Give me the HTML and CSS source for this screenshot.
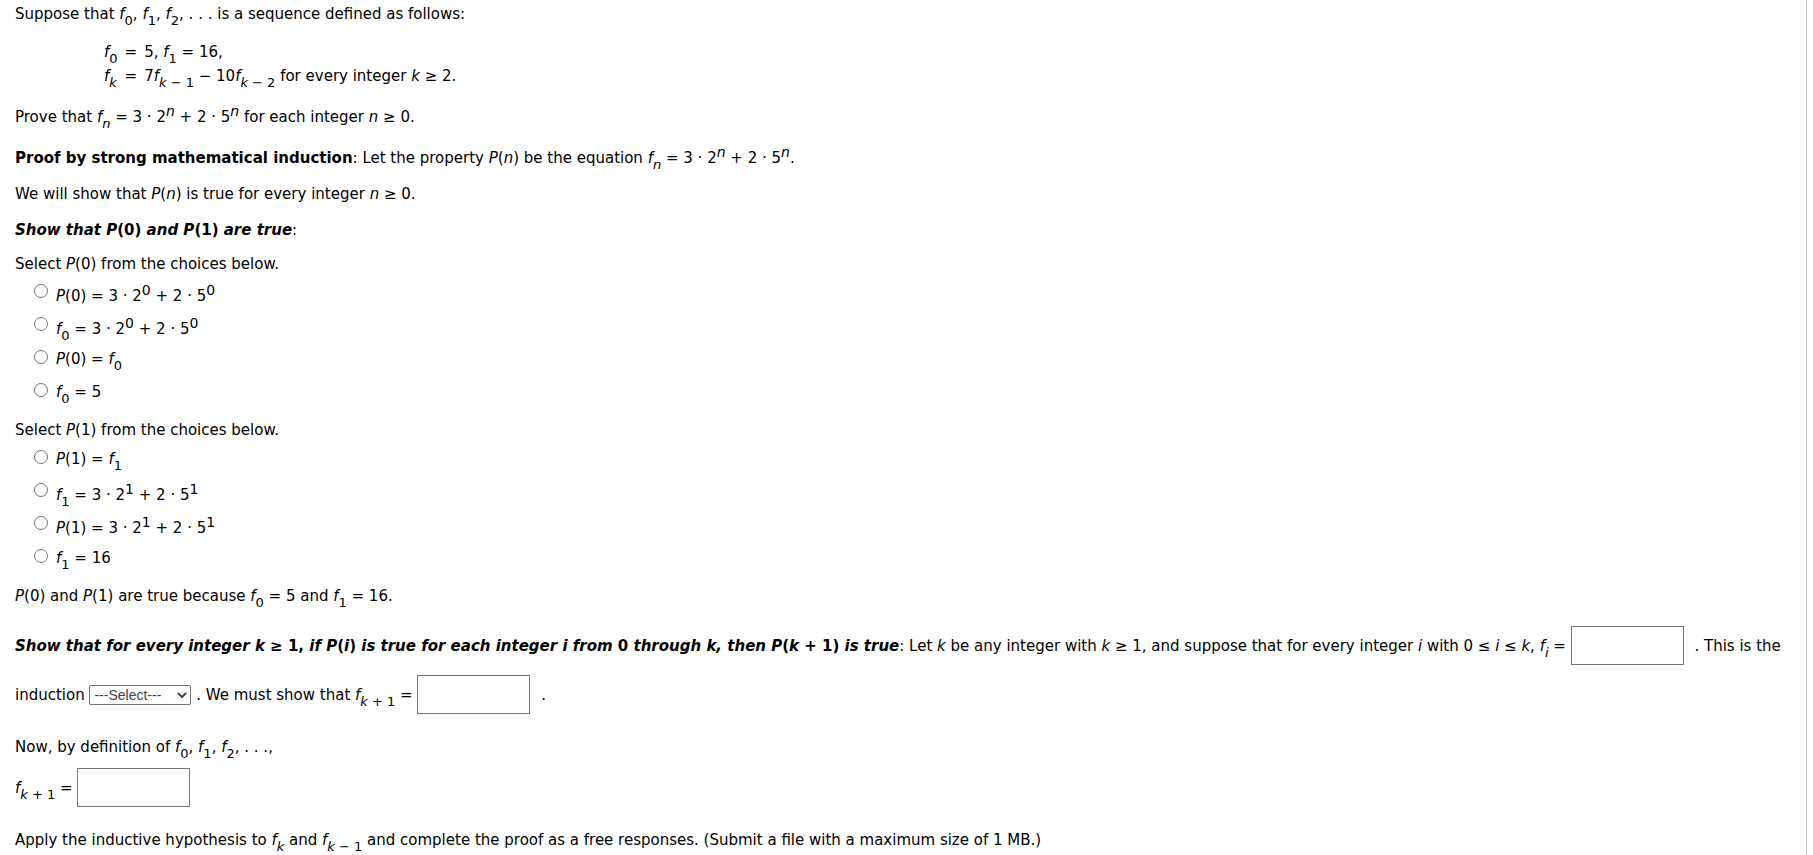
FILE: index.html
```
<!DOCTYPE html>
<html lang="en">

<head>
    <meta charset="UTF-8">
    <meta name="viewport" content="width=device-width, initial-scale=1.0">
    <title>Strong Mathematical Induction</title>
    <link rel="stylesheet" href="styles.css">
</head>

<body>
    <main class="question">
        <p class="intro">Suppose that <i>f</i><sub>0</sub>, <i>f</i><sub>1</sub>, <i>f</i><sub>2</sub>, . . . is a sequence defined as follows:</p>

        <div class="equations">
            <span><i>f</i><sub>0</sub></span>
            <span>=</span>
            <span>5, <i>f</i><sub>1</sub> = 16,</span>
            <span><i>f</i><sub><i>k</i></sub></span>
            <span>=</span>
            <span>7<i>f</i><sub><i>k</i> − 1</sub> − 10<i>f</i><sub><i>k</i> − 2</sub> for every integer <i>k</i> ≥ 2.</span>
        </div>

        <p class="statement">Prove that <i>f</i><sub><i>n</i></sub> = 3 · 2<sup><i>n</i></sup> + 2 · 5<sup><i>n</i></sup> for each integer <i>n</i> ≥ 0.</p>
        <p class="statement"><b>Proof by strong mathematical induction</b>: Let the property <i>P</i>(<i>n</i>) be the equation <i>f</i><sub><i>n</i></sub> = 3 · 2<sup><i>n</i></sup> + 2 · 5<sup><i>n</i></sup>.</p>
        <p class="step">We will show that <i>P</i>(<i>n</i>) is true for every integer <i>n</i> ≥ 0.</p>
        <p class="step"><b><i>Show that P</i>(0) <i>and P</i>(1) <i>are true</i></b>:</p>

        <fieldset class="choices">
            <legend>Select <i>P</i>(0) from the choices below.</legend>
            <label class="choice"><input type="radio" name="p0"><span><i>P</i>(0) = 3 · 2<sup>0</sup> + 2 · 5<sup>0</sup></span></label>
            <label class="choice"><input type="radio" name="p0"><span><i>f</i><sub>0</sub> = 3 · 2<sup>0</sup> + 2 · 5<sup>0</sup></span></label>
            <label class="choice"><input type="radio" name="p0"><span><i>P</i>(0) = <i>f</i><sub>0</sub></span></label>
            <label class="choice"><input type="radio" name="p0"><span><i>f</i><sub>0</sub> = 5</span></label>
        </fieldset>

        <fieldset class="choices">
            <legend>Select <i>P</i>(1) from the choices below.</legend>
            <label class="choice"><input type="radio" name="p1"><span><i>P</i>(1) = <i>f</i><sub>1</sub></span></label>
            <label class="choice"><input type="radio" name="p1"><span><i>f</i><sub>1</sub> = 3 · 2<sup>1</sup> + 2 · 5<sup>1</sup></span></label>
            <label class="choice"><input type="radio" name="p1"><span><i>P</i>(1) = 3 · 2<sup>1</sup> + 2 · 5<sup>1</sup></span></label>
            <label class="choice"><input type="radio" name="p1"><span><i>f</i><sub>1</sub> = 16</span></label>
        </fieldset>

        <p class="reason"><i>P</i>(0) and <i>P</i>(1) are true because <i>f</i><sub>0</sub> = 5 and <i>f</i><sub>1</sub> = 16.</p>

        <p class="blanks"><b><i>Show that for every integer k</i> ≥ 1, <i>if P</i>(<i>i</i>) <i>is true for each integer i from</i> 0 <i>through k, then P</i>(<i>k</i> + 1) <i>is true</i></b>: Let <i>k</i> be any integer with <i>k</i> ≥ 1, and suppose that for every integer <i>i</i> with 0 ≤ <i>i</i> ≤ <i>k</i>, <label for="fi"><i>f</i><sub><i>i</i></sub> =</label> <input class="answer" id="fi" type="text"> . This is the induction <select class="pick" aria-label="induction">
                <option>---Select---</option>
                <option>basis</option>
                <option>hypothesis</option>
            </select> . We must show that <label for="fk1"><i>f</i><sub><i>k</i> + 1</sub> =</label> <input class="answer" id="fk1" type="text"> .</p>

        <p class="definition">Now, by definition of <i>f</i><sub>0</sub>, <i>f</i><sub>1</sub>, <i>f</i><sub>2</sub>, . . .,</p>
        <p class="blanks single"><label for="def"><i>f</i><sub><i>k</i> + 1</sub> =</label> <input class="answer" id="def" type="text"></p>
        <p class="apply">Apply the inductive hypothesis to <i>f</i><sub><i>k</i></sub> and <i>f</i><sub><i>k</i> − 1</sub> and complete the proof as a free responses. (Submit a file with a maximum size of 1 MB.)</p>
    </main>
</body>

</html>
```

FILE: styles.css
```
body {
    margin: 0;
    font-family: Verdana, "DejaVu Sans", sans-serif;
    font-size: 15px;
    line-height: 20px;
    color: #000;
    background-color: #fff;
}

.question {
    box-sizing: border-box;
    min-height: 100vh;
    margin-right: 6px;
    padding: 4px 8px 0 15px;
    border-right: 1px solid #ccc;
}

p {
    margin: 0;
}

sub,
sup {
    line-height: 0;
}

sub {
    font-size: 13px;
    vertical-align: -6px;
}

sup {
    font-size: 14px;
    vertical-align: 6px;
}

.equations {
    display: grid;
    grid-template-columns: max-content max-content 1fr;
    column-gap: 7px;
    row-gap: 4px;
    margin: 18px 0 0 89px;
}

.statement {
    margin-top: 21px;
}

.step {
    margin-top: 16px;
}

.choices {
    margin: 14px 0 0;
    padding: 0;
    border: 0;
}

.choices + .choices {
    margin-top: 5px;
}

.choices legend {
    padding: 0;
    margin-bottom: 9px;
}

.choice {
    display: flex;
    align-items: flex-start;
    gap: 8px;
    min-height: 33px;
    margin-left: 19px;
}

.choice input {
    width: 14px;
    height: 14px;
    margin: 1px 0 0;
}

/* exponents push the line down */
.choice sup {
    line-height: 14px;
}

.reason {
    margin-top: 5px;
}

.blanks {
    margin-top: 16px;
    line-height: 49px;
}

.answer {
    box-sizing: border-box;
    width: 113px;
    height: 39px;
    margin-right: 6px;
    padding: 2px 6px;
    border: 1px solid #767676;
    font: inherit;
    line-height: 20px;
    vertical-align: 1px;
}

.pick {
    height: 20px;
    width: 102px;
    border: 1px solid #767676;
    border-radius: 2px;
    background-color: #fff;
    color: #444;
    font-family: Arial, "Liberation Sans", sans-serif;
    font-size: 14px;
}

.definition {
    margin-top: 17px;
}

.single {
    margin-top: 7px;
}

.apply {
    margin-top: 17px;
}
```
